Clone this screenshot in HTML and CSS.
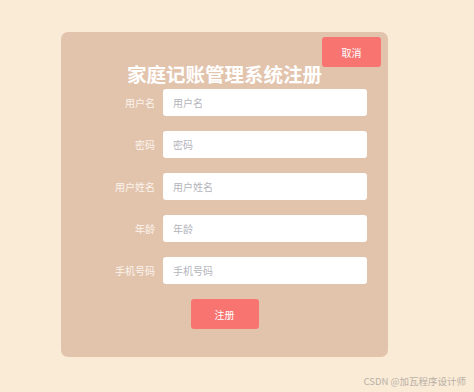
FILE: index.html
```html
<!DOCTYPE html>
<html lang="zh">
<head>
<meta charset="utf-8">
<title>家庭记账管理系统注册</title>
<link rel="stylesheet" href="styles.css">
</head>
<body>
<div class="page">
  <div class="card">
    <button class="btn cancel">取消</button>
    <h1 class="title">家庭记账管理系统注册</h1>
    <form class="form">
      <div class="row"><label class="label">用户名</label><input class="input" placeholder="用户名"></div>
      <div class="row"><label class="label">密码</label><input class="input" type="password" placeholder="密码"></div>
      <div class="row"><label class="label">用户姓名</label><input class="input" placeholder="用户姓名"></div>
      <div class="row"><label class="label">年龄</label><input class="input" placeholder="年龄"></div>
      <div class="row"><label class="label">手机号码</label><input class="input" placeholder="手机号码"></div>
      <div class="actions"><button type="button" class="btn submit">注册</button></div>
    </form>
  </div>
  <div class="watermark">CSDN @加瓦程序设计师</div>
</div>
</body>
</html>
```

FILE: styles.css
```css
* { box-sizing: border-box; }
html, body { margin: 0; padding: 0; }
body {
  background: #faebd7;
  font-family: "Noto Sans CJK SC", "Noto Sans", sans-serif;
  width: 474px;
  height: 392px;
  overflow: hidden;
}
.page {
  position: relative;
  height: 392px;
  padding: 32px 0 0 61px;
}
.card {
  position: relative;
  width: 327px;
  height: 325px;
  background: #e2c4ad;
  border-radius: 7px;
  padding-top: 29px;
}
.btn {
  border: none;
  background: #f77471;
  color: #fff;
  font-family: inherit;
  font-size: 10px;
  border-radius: 3px;
  height: 30px;
  padding: 0;
  cursor: pointer;
}
.cancel {
  position: absolute;
  top: 5px;
  right: 7px;
  width: 59px;
}
.title {
  margin: 0;
  text-align: center;
  color: #fff;
  font-size: 19.5px;
  line-height: 25px;
  font-weight: 700;
}
.form {
  margin: 3px 0 0;
  display: flex;
  flex-direction: column;
  gap: 15px;
}
.row {
  display: grid;
  grid-template-columns: 94px 204px;
  column-gap: 8px;
  align-items: center;
  height: 27px;
}
.label {
  text-align: right;
  color: #fbf3ec;
  font-size: 10px;
}
.input {
  width: 204px;
  height: 27px;
  border: none;
  border-radius: 3px;
  background: #fff;
  padding: 0 10px;
  font-family: inherit;
  font-size: 10px;
  outline: none;
}
.input::placeholder { color: #b4b4bc; }
.actions {
  display: flex;
  justify-content: center;
}
.submit { width: 68px; }
.watermark {
  position: absolute;
  right: 8px;
  bottom: 4px;
  font-size: 9.5px;
  color: #b9b0a6;
  font-family: "Noto Sans CJK SC", "Noto Sans", sans-serif;
}
```
